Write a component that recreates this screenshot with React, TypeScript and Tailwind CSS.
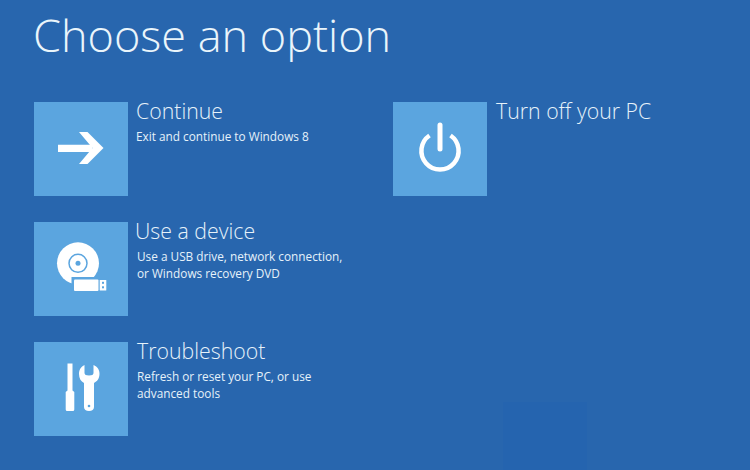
import type { ReactNode } from "react";

type OptionProps = {
  icon: ReactNode;
  title: string;
  lines?: string[];
  titleClass?: string;
  bodyClass?: string;
};

function ArrowIcon() {
  return (
    <svg width="94" height="94" viewBox="0 0 94 94" aria-hidden>
      <path d="M24 42.700H58V50H24Z" fill="#fff" />
      <path d="M45 30H53.500L69.500 46L53.500 62H45L58.500 46Z" fill="#fff" />
    </svg>
  );
}

function DeviceIcon() {
  return (
    <svg width="94" height="94" viewBox="0 0 94 94" aria-hidden>
      <circle cx="44" cy="41.300" r="21" fill="#fff" />
      <circle cx="44" cy="41.300" r="9" fill="none" stroke="#5ba5df" strokeWidth="1.500" />
      <circle cx="44" cy="41.300" r="2.500" fill="#5ba5df" />
      <rect x="37.500" y="55" width="37" height="16.500" fill="#5ba5df" />
      <rect x="40" y="57.500" width="24.500" height="11.500" rx="1" fill="#fff" />
      <rect x="65.700" y="58" width="6.600" height="10.500" rx="0.500" fill="#fff" />
      <rect x="68" y="59.800" width="2" height="2" fill="#5ba5df" />
      <rect x="68" y="64.300" width="2" height="2" fill="#5ba5df" />
    </svg>
  );
}

function ToolsIcon() {
  return (
    <svg width="94" height="94" viewBox="0 0 94 94" aria-hidden>
      <path d="M33.500 21.500H38.500V48.500L40.300 50V67.500Q40.300 69 38.800 69H33.200Q31.700 69 31.700 67.500V50L33.500 48.500Z" fill="#fff" />
      <path
        d="M50.500 23V31Q50.500 33.500 55 33.500Q59.500 33.500 59.500 31V23C63.500 24.500 65.500 28 65.500 32C65.500 36.500 63 39.500 60 41V65C60 67.500 58 69 55 69C52 69 50 67.500 50 65V41C47 39.500 45 36.500 45 32C45 28 47 24.500 50.500 23Z"
        fill="#fff"
      />
      <circle cx="55" cy="64" r="1.300" fill="#5ba5df" />
    </svg>
  );
}

function PowerIcon() {
  return (
    <svg width="94" height="94" viewBox="0 0 94 94" aria-hidden>
      <path d="M36.500 33.500A18.600 18.600 0 1 0 57.500 33.500" fill="none" stroke="#fff" strokeWidth="4.500" />
      <path d="M47 23V47" stroke="#fff" strokeWidth="5" strokeLinecap="round" />
    </svg>
  );
}

function Option({ icon, title, lines = [], titleClass = "", bodyClass = "" }: OptionProps) {
  return (
    <div className="flex">
      <div className="h-[94px] w-[94px] shrink-0 bg-[#5ba5df]">{icon}</div>
      <div className="text-[#e6f2fa]">
        <h2 className={`-mt-px text-[21.300px] leading-[20px] font-light ${titleClass}`}>{title}</h2>
        <div className={`mt-[7px] text-[11.800px] leading-[17px] ${bodyClass}`}>
          {lines.map((line) => (
            <p key={line}>{line}</p>
          ))}
        </div>
      </div>
    </div>
  );
}

export default function App() {
  return (
    <div className="relative h-[470px] w-[750px] overflow-hidden bg-[#2866ae] pt-[7px] pl-[34px] font-['Open_Sans','Liberation_Sans',sans-serif]">
      <div className="absolute top-[402px] left-[503px] h-[68px] w-[84px] bg-[#2564af]" />
      <h1 className="relative -ml-px text-[45px] leading-[56px] font-light text-[#eaf5fb]">Choose an option</h1>
      <div className="relative mt-[39px] flex gap-[265px]">
        <div className="flex w-[94px] flex-col gap-[26px] whitespace-nowrap">
          <Option icon={<ArrowIcon />} title="Continue" titleClass="ml-[8px]" bodyClass="ml-[8px]" lines={["Exit and continue to Windows 8"]} />
          <Option
            icon={<DeviceIcon />}
            title="Use a device"
            titleClass="ml-[7px]"
            bodyClass="ml-[9px]"
            lines={["Use a USB drive, network connection,", "or Windows recovery DVD"]}
          />
          <Option
            icon={<ToolsIcon />}
            title="Troubleshoot"
            titleClass="ml-[9px]"
            bodyClass="ml-[9px]"
            lines={["Refresh or reset your PC, or use", "advanced tools"]}
          />
        </div>
        <div className="whitespace-nowrap">
          <Option icon={<PowerIcon />} title="Turn off your PC" titleClass="ml-[9px]" />
        </div>
      </div>
    </div>
  );
}
